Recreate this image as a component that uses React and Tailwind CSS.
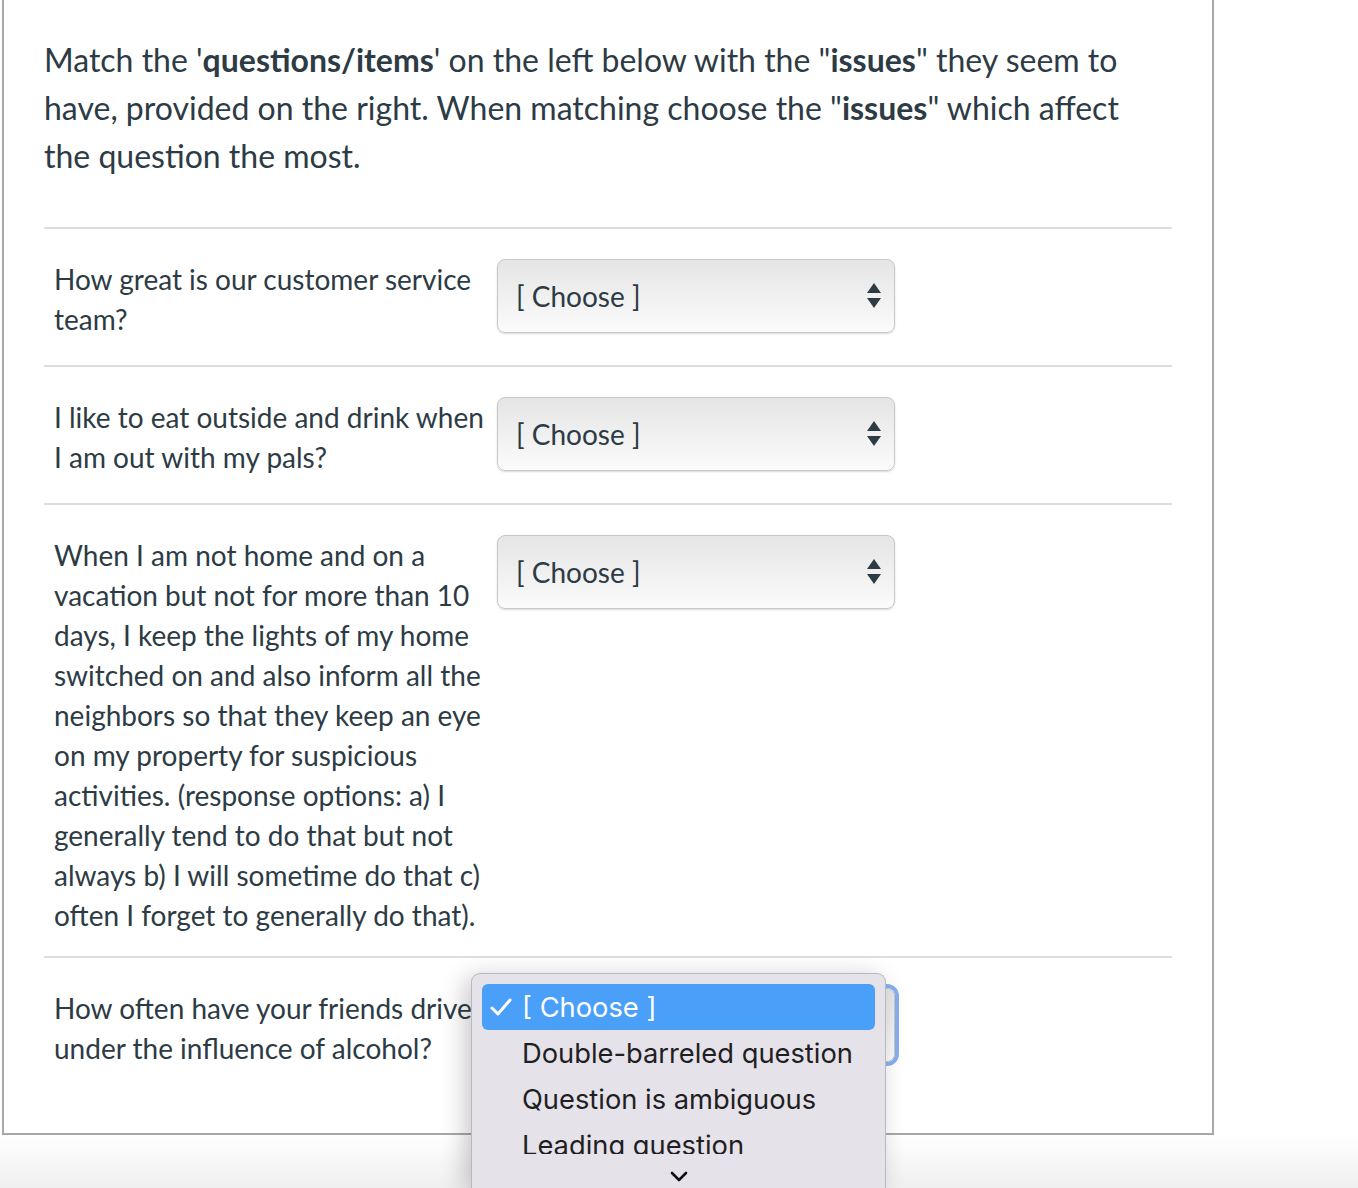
import React from 'react';

const questions = [
  'How great is our customer service team?',
  'I like to eat outside and drink when I am out with my pals?',
  'When I am not home and on a vacation but not for more than 10 days, I keep the lights of my home switched on and also inform all the neighbors so that they keep an eye on my property for suspicious activities. (response options: a) I generally tend to do that but not always b) I will sometime do that c) often I forget to generally do that).',
  'How often have your friends drive under the influence of alcohol?',
];

const options = ['[ Choose ]', 'Double-barreled question', 'Question is ambiguous', 'Leading question', 'Loaded question'];

const Arrows = () => (
  <svg width="14" height="26" viewBox="0 0 14 26" className="shrink-0">
    <path d="M7 0 L14 10 L0 10 Z" fill="#2d3b45" />
    <path d="M0 15 L14 15 L7 25 Z" fill="#2d3b45" />
  </svg>
);

const SelectBox = ({ focused }) => (
  <div
    className={`w-[398px] h-[74px] mb-[11px] flex items-center justify-between pl-[18px] pr-[13px] rounded-[8px] border border-[#c6c9cc] bg-gradient-to-b from-[#e5e5e5] to-[#fbfbfb] shadow-[0_1px_2px_rgba(0,0,0,0.15)] text-[28px] text-[#2d3b45] ${
      focused ? 'ring-4 ring-[#86aff0]' : ''
    }`}
  >
    <span>[ Choose ]</span>
    <Arrows />
  </div>
);

const Popup = () => (
  <div className="absolute left-[-26px] top-[-15px] w-[415px] h-[215px] bg-[#e5e2ea] border border-b-0 border-[#b9b8bd] rounded-t-[9px] shadow-[-6px_4px_24px_rgba(0,0,0,0.22)] pt-[10px] px-[10px] z-10 font-['Inter',sans-serif] text-[27.3px]">
    <div className="h-[170px] overflow-hidden">
      {options.map((o, i) => (
        <div
          key={o}
          className={`h-[46px] flex items-center rounded-[6px] ${i === 0 ? 'bg-[#4a9ff9] text-white' : 'text-[#1f1f1f]'}`}
        >
          <span className="w-[40px] pl-[8px] flex items-center">
            {i === 0 && (
              <svg width="22" height="18" viewBox="0 0 22 18">
                <path d="M2 10 L8 16 L20 2" fill="none" stroke="white" strokeWidth="3" strokeLinecap="round" strokeLinejoin="round" />
              </svg>
            )}
          </span>
          <span className="pt-[3px]">{o}</span>
        </div>
      ))}
    </div>
    <div className="flex justify-center pt-[17px]">
      <svg width="18" height="11" viewBox="0 0 18 11">
        <path d="M2 2 L9 9 L16 2" fill="none" stroke="#111" strokeWidth="2.6" strokeLinecap="round" strokeLinejoin="round" />
      </svg>
    </div>
  </div>
);

export default function App() {
  return (
    <div className="w-[1358px] h-[1188px] overflow-hidden bg-white font-['Lato',sans-serif] text-[#2d3b45]">
      <div className="ml-[2px] w-[1212px] border-x-2 border-b-2 border-[#a8a8a8] pt-[36px] pb-[39px] px-[40px]">
        <p className="w-[1100px] text-[32px] leading-[48px] mb-[47px]">
          Match the '<b>questions/items</b>' on the left below with the "<b>issues</b>" they seem to have, provided on the
          right. When matching choose the "<b>issues</b>" which affect the question the most.
        </p>
        {questions.map((q, i) => (
          <div key={i} className="flex items-start border-t-2 border-[#dddddd] pt-[30px] pb-[21px] px-[10px]">
            <div className="w-[435px] text-[28px] leading-[40px]">{q}</div>
            <div className="relative ml-[8px]">
              <SelectBox focused={i === 3} />
              {i === 3 && <Popup />}
            </div>
          </div>
        ))}
      </div>
      <div className="h-[53px] bg-gradient-to-b from-white to-[#efefef]" />
    </div>
  );
}
